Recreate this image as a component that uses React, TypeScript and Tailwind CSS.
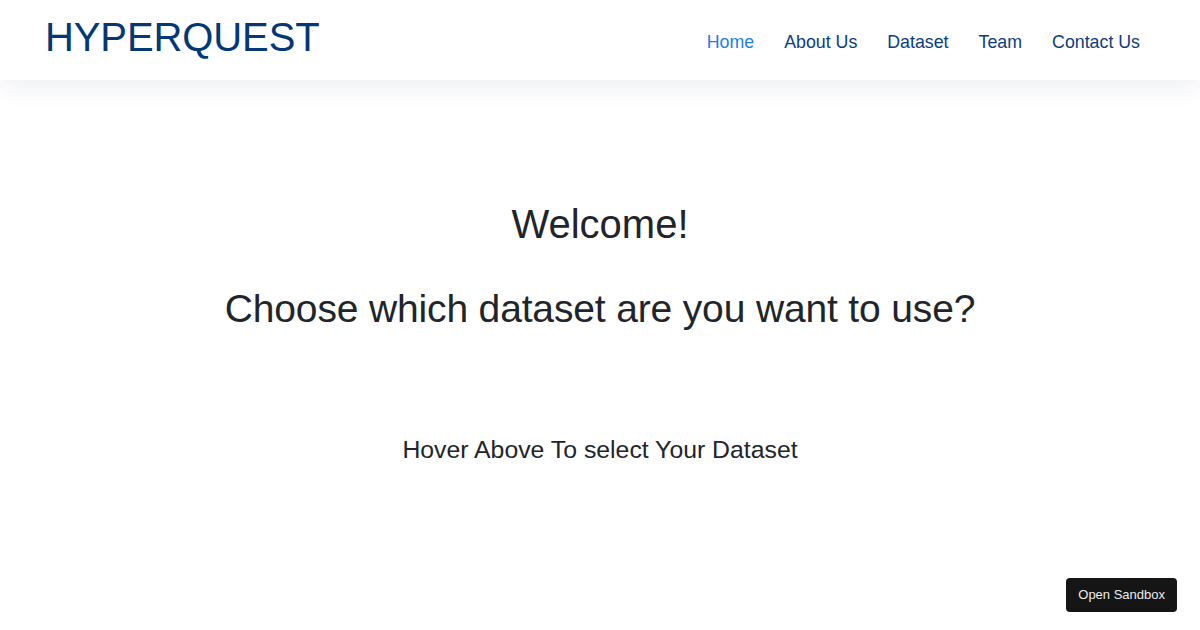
import React from "react";

export default function App() {
  const links = ["Home", "About Us", "Dataset", "Team", "Contact Us"];
  return (
    <div className="min-h-[630px] bg-white font-['Liberation_Sans',Arial,sans-serif] text-[#212529]">
      <header className="relative z-10 flex h-[80px] items-start justify-between bg-white pl-[45px] pr-[45px] shadow-[0_8px_22px_rgba(30,40,90,0.07)]">
        <div className="mt-[17px] text-[40px] leading-[40px] tracking-[-0.1px] text-[#033874]">HYPERQUEST</div>
        <nav className="mt-[29px] flex">
          {links.map((l, i) => (
            <a
              key={l}
              className={`px-[15px] text-[17.8px] leading-[27px] ${i === 0 ? "text-[#1a80ea]" : "text-[#0b3d7e]"}`}
            >
              {l}
            </a>
          ))}
        </nav>
      </header>
      <main className="flex flex-col items-center pt-[120px] text-center">
        <h1 className="text-[40px] leading-[48px]">Welcome!</h1>
        <h1 className="mt-[37px] text-[39px] leading-[48px] tracking-[-0.15px]">Choose which dataset are you want to use?</h1>
        <h4 className="mt-[102px] text-[24.8px] leading-[29px]">Hover Above To select Your Dataset</h4>
      </main>
      <button className="fixed bottom-[18px] right-[23px] h-[34px] rounded-[4px] bg-[#151515] px-[12px] text-[13px] text-[#ececec]">
        Open Sandbox
      </button>
    </div>
  );
}
